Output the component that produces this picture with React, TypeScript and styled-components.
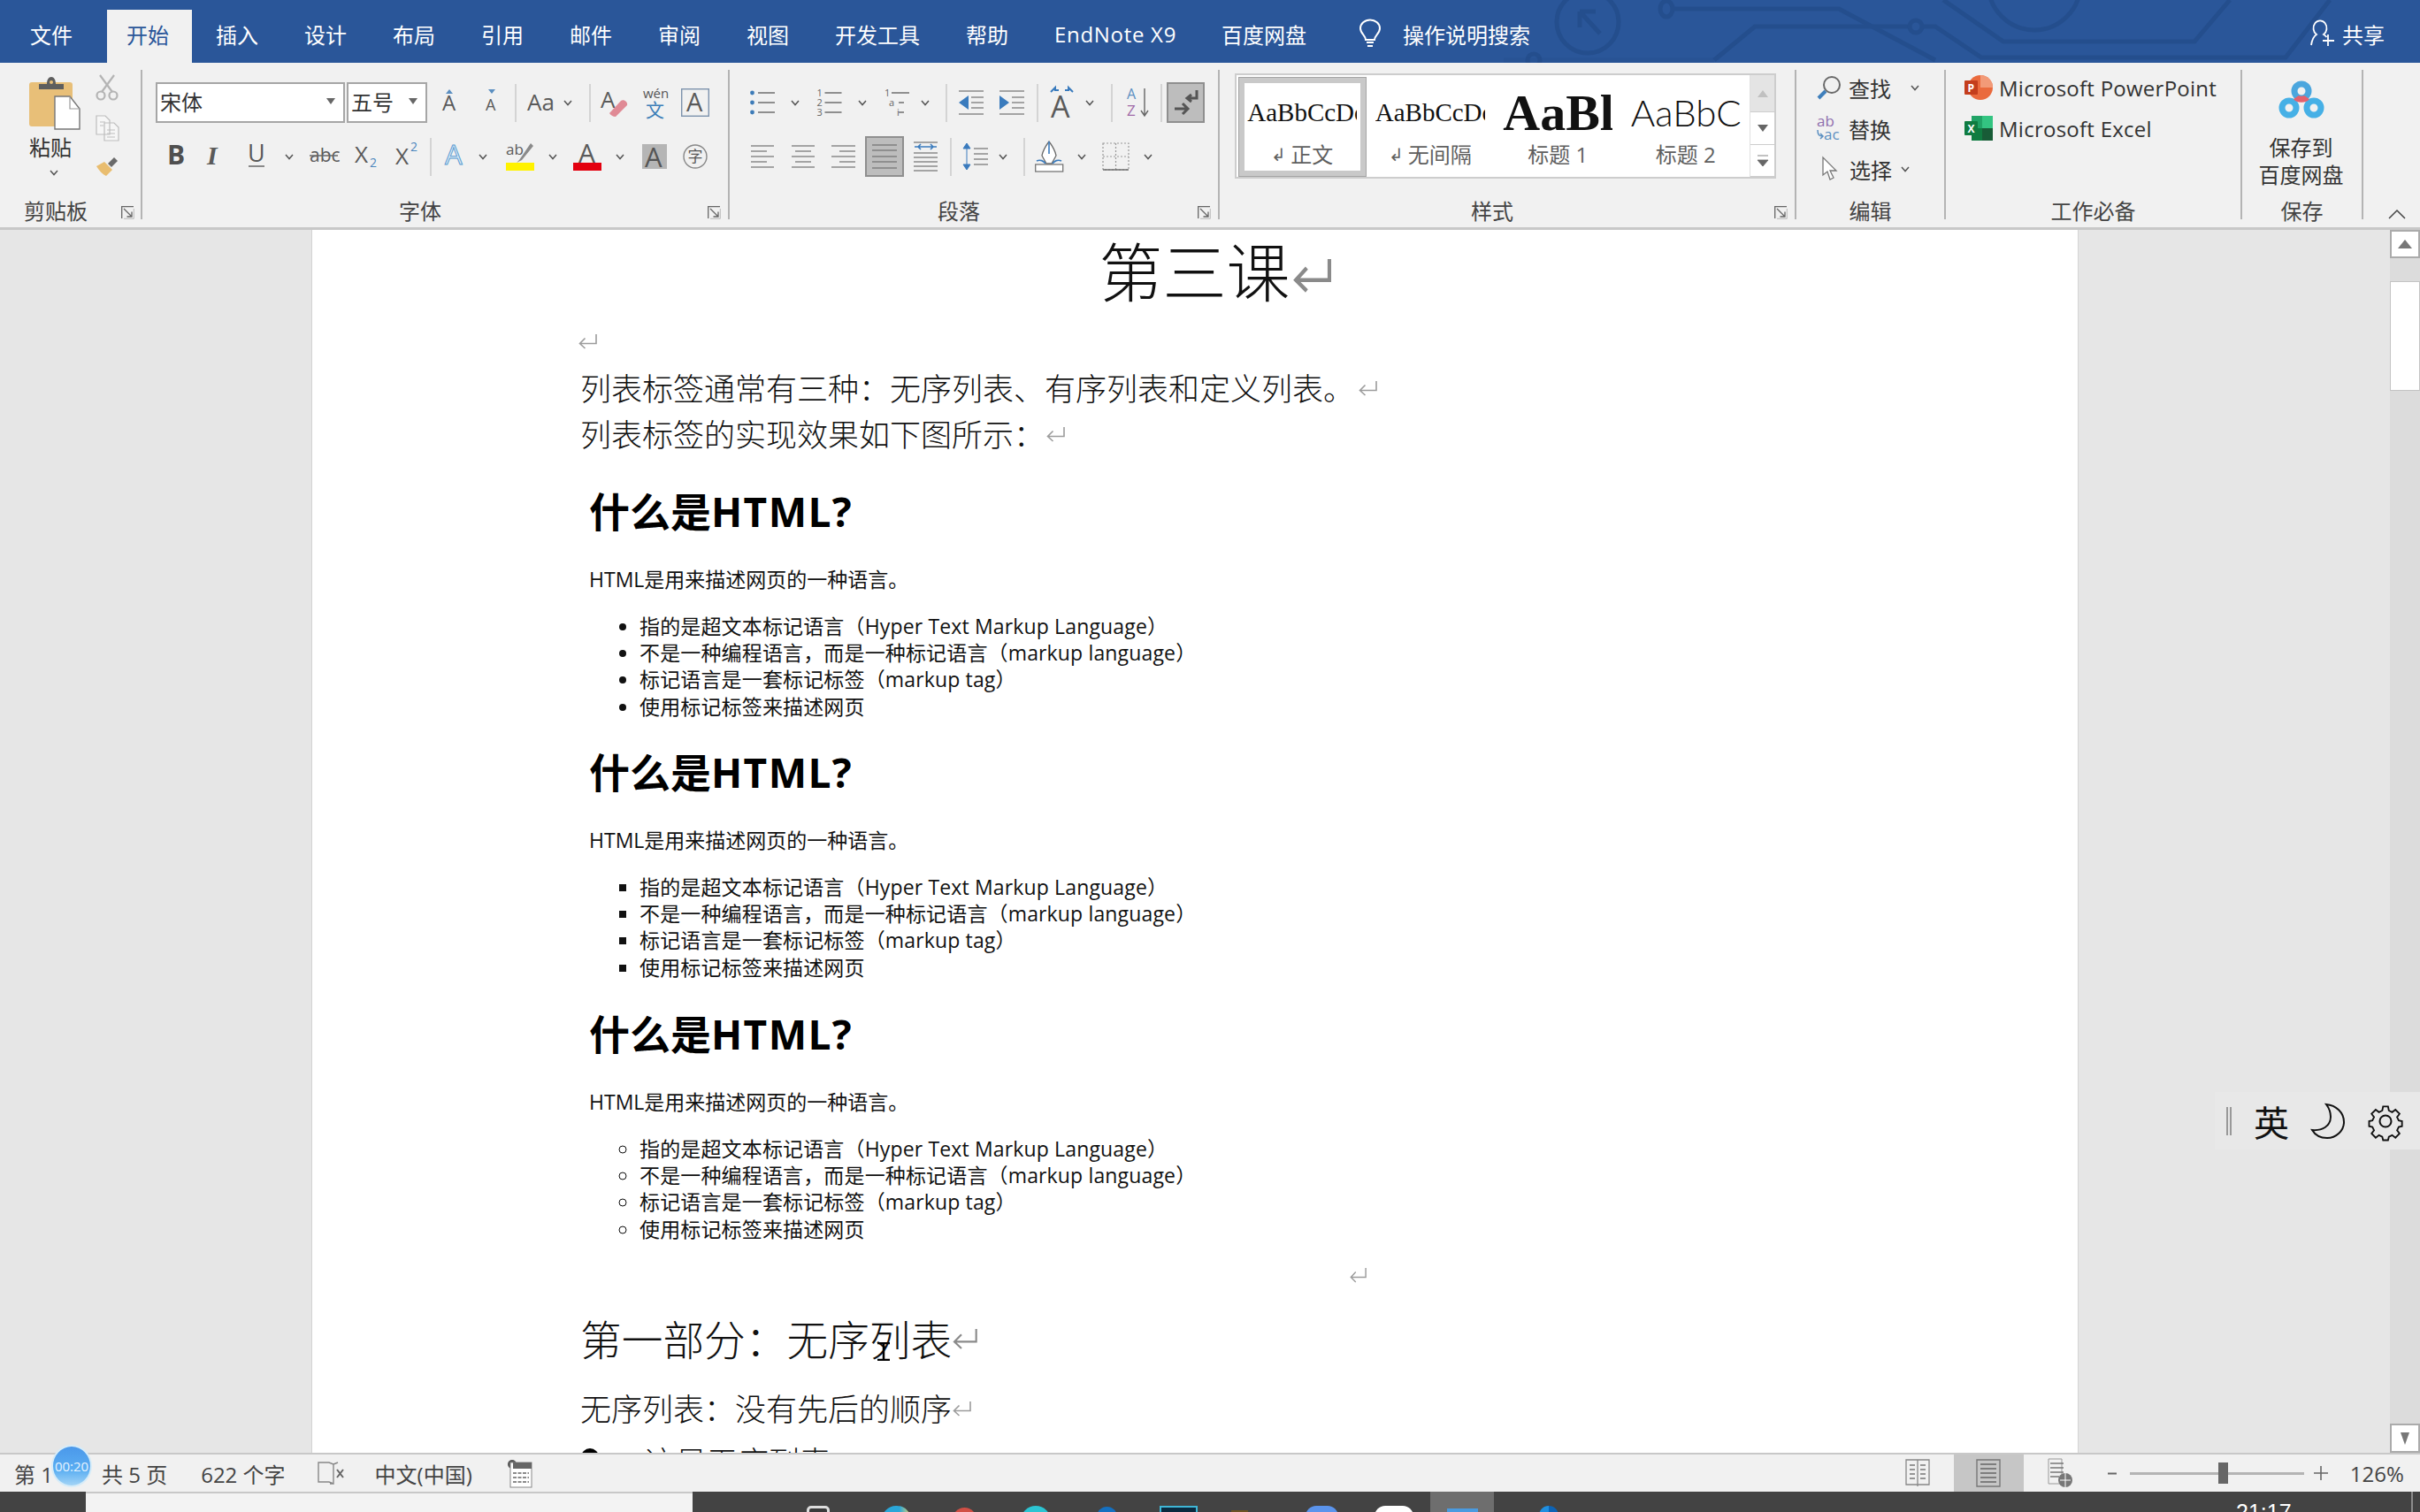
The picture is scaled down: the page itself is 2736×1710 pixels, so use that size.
import React from "react";
import styled, { createGlobalStyle } from "styled-components";

const UI = `"Open Sans","Noto Sans CJK SC",sans-serif`;
const SERIF = `"Liberation Serif","Noto Sans CJK SC",serif`;

const Global = createGlobalStyle`
  html, body { margin: 0; padding: 0; background: #f1f1f1; }
  * { box-sizing: border-box; }
`;

const Shell = styled.div`
  width: 2736px; height: 1710px; overflow: hidden; display: flex; flex-direction: column;
  font-family: ${UI}; font-size: 24px; color: #333; position: relative;
`;

/* ---------- title / tabs ---------- */
const TabBar = styled.div`
  height: 71px; flex: none; background: #2a5699; display: flex; align-items: flex-end;
  padding-left: 8px; position: relative; overflow: hidden;
`;
const Watermark = styled.svg`
  position: absolute; left: 0; top: 0; pointer-events: none;
`;
const Tab = styled.div<{ $w?: number; $ls?: number }>`
  height: 60px; padding: 0 26px 6px; display: flex; align-items: center; color: #fff;
  font-size: 24px; white-space: nowrap; position: relative; ${(p) => (p.$w ? `width:${p.$w}px;` : "")}
  letter-spacing: ${(p) => p.$ls ?? 0}px;
`;
const ActiveTab = styled(Tab)`
  background: #f1f1f1; color: #2a5699; margin: 0 1px 0 13px; padding: 0 26px 6px 22px;
`;
const SearchHint = styled.div`
  display: flex; align-items: center; gap: 24px; color: #fff; height: 60px; padding-bottom: 6px;
  margin-left: 33px; position: relative;
`;
const ShareBox = styled.div`
  margin-left: auto; margin-right: 40px; height: 60px; padding-bottom: 6px; display: flex; align-items: center; gap: 8px;
  color: #fff; position: relative;
`;

/* ---------- ribbon ---------- */
const Ribbon = styled.div`
  height: 189px; flex: none; background: #f1f1f1; border-bottom: 3px solid #c8c8c8; display: flex;
`;
const Group = styled.section<{ $w: number }>`
  width: ${(p) => p.$w}px; flex: none; height: 186px; display: flex; flex-direction: column; position: relative;
`;
const GroupBody = styled.div`
  height: 156px; flex: none; position: relative; display: flex;
`;
const GroupFooter = styled.div<{ $pr?: number }>`
  height: 24px; line-height: 24px; text-align: center; color: #444; padding-right: ${(p) => p.$pr ?? 0}px;
  position: relative;
`;
const Launcher = styled.svg<{ $r: number }>`
  position: absolute; right: ${(p) => p.$r}px; top: 6px;
`;
const GroupSep = styled.div`
  width: 2px; height: 169px; margin-top: 8px; background: #b4b4b4; flex: none;
`;
const Rows = styled.div`
  display: flex; flex-direction: column; gap: 15px; padding-top: 22px; width: 100%;
`;
const ToolRow = styled.div`
  height: 46px; display: flex; align-items: center;
`;
const Combo = styled.div<{ $ml: number; $w: number }>`
  margin-left: ${(p) => p.$ml}px; width: ${(p) => p.$w}px; height: 46px; background: #fff; border: 2px solid #a6a6a6;
  display: flex; align-items: center; justify-content: space-between; padding: 0 8px 3px 3px; color: #333; flex: none;
`;
const VSep = styled.div<{ $ml: number }>`
  margin-left: ${(p) => p.$ml}px; width: 2px; height: 43px; background: #d4d4d4; flex: none;
`;
const Ic = styled.svg<{ $ml?: number }>`
  display: block; flex: none; margin-left: ${(p) => p.$ml ?? 0}px; overflow: visible;
`;
const PressedBtn = styled.div<{ $ml: number; $w: number }>`
  margin-left: ${(p) => p.$ml}px; width: ${(p) => p.$w}px; height: 46px; flex: none; background: #bdbdbd;
  border: 2px solid #8f8f8f; display: flex; align-items: center; justify-content: center;
`;

/* clipboard */
const PasteCol = styled.div`
  margin-left: 33px; width: 57px; padding-top: 16px; display: flex; flex-direction: column; align-items: flex-start;
`;
const PasteLabel = styled.div`
  margin: 5px 0 9px; height: 32px; line-height: 32px; color: #333;
`;
const SmallCol = styled.div`
  margin-left: 18px; padding-top: 14px; display: flex; flex-direction: column; gap: 17px;
`;

/* styles gallery */
const Gallery = styled.div`
  margin: 12px 0 0 17px; width: 612px; height: 119px; background: #fff; border: 2px solid #cdcdcd; display: flex;
`;
const GalleryItems = styled.div`
  width: 580px; padding: 2px 0 2px 2px; display: flex;
`;
const StyleItem = styled.div<{ $sel?: boolean }>`
  width: 144.5px; flex: none; height: 113px; display: flex; flex-direction: column; align-items: center; overflow: hidden;
  ${(p) => (p.$sel ? "border: 7px solid #c9c9c9; outline: 1px solid #a5a5a5; outline-offset: -1px;" : "border: 7px solid transparent;")}
`;
const Preview = styled.div<{ $font: string; $size: number; $weight?: number; $w?: number }>`
  height: 66px; width: ${(p) => p.$w ?? 124}px; overflow: hidden; display: flex; align-items: center; white-space: nowrap; flex: none;
  font-family: ${(p) => p.$font}; font-size: ${(p) => p.$size}px; font-weight: ${(p) => p.$weight ?? 400}; color: #111;
`;
const StyleName = styled.div`
  height: 30px; line-height: 30px; color: #5f5f5f; white-space: nowrap; display: flex; align-items: center; gap: 5px;
`;
const GalleryScroll = styled.div`
  width: 28px; display: flex; flex-direction: column; border-left: 1px solid #e0e0e0;
`;
const ScrollCell = styled.div<{ $h: number; $bg?: string }>`
  height: ${(p) => p.$h}px; background: ${(p) => p.$bg ?? "#fff"}; border-bottom: 1px solid #cdcdcd;
  display: flex; align-items: center; justify-content: center;
`;

/* edit + must-have */
const CmdCol = styled.div`
  padding-top: 6px; display: flex; flex-direction: column; width: 100%;
`;
const CmdRow = styled.div<{ $pl: number }>`
  height: 46px; display: flex; align-items: center; padding-left: ${(p) => p.$pl}px; padding-bottom: 2px; white-space: nowrap; color: #333;
`;
const CmdText = styled.span<{ $ml: number; $ls?: number }>`
  margin-left: ${(p) => p.$ml}px; letter-spacing: ${(p) => p.$ls ?? 0}px;
`;
const SaveCol = styled.div`
  width: 100%; padding-top: 21px; display: flex; flex-direction: column; align-items: center; padding-right: 2px;
`;
const SaveText = styled.div`
  margin-top: 18px; line-height: 31px; text-align: center; color: #333;
`;
const CollapseZone = styled.div`
  flex: 1; display: flex; align-items: flex-end; justify-content: flex-end; padding: 0 16px 9px 0; height: 186px;
`;

/* ---------- document ---------- */
const Canvas = styled.div`
  height: 1383px; flex: none; display: flex; background: #e6e6e6; overflow: hidden;
`;
const PageArea = styled.div`
  width: 2702px; flex: none; padding-left: 352px; overflow: hidden;
`;
const Page = styled.article`
  width: 1998px; height: 1383px; background: #fff; border: solid #d4d4d4; border-width: 0 1px; overflow: hidden;
  padding: 13px 304px 0 303px; font-family: ${SERIF}; font-weight: 300; color: #111; font-size: 35px;
`;
const DocTitle = styled.h1`
  margin: 0 0 15px; height: 76px; line-height: 76px; font-size: 72px; font-weight: 300; text-align: center; white-space: nowrap;
`;
const DocLine = styled.p<{ $h?: number; $mt?: number; $pl?: number }>`
  margin: ${(p) => p.$mt ?? 0}px 0 0; padding-left: ${(p) => p.$pl ?? 0}px; height: ${(p) => p.$h ?? 52}px;
  line-height: ${(p) => p.$h ?? 52}px; white-space: nowrap;
`;
const Ret = styled.svg<{ $ml?: number; $mr?: number; $va?: number }>`
  margin-left: ${(p) => p.$ml ?? 2}px; margin-right: ${(p) => p.$mr ?? 0}px; vertical-align: ${(p) => p.$va ?? 6}px; overflow: visible;
`;
const DemoBlock = styled.div<{ $mt?: number }>`
  margin: ${(p) => p.$mt ?? 0}px 0 0 10px; height: 265px; font-family: ${UI}; font-weight: 400; color: #111;
`;
const DemoH = styled.h2`
  margin: 0; height: 60px; line-height: 55px; font-size: 46px; font-weight: 700; color: #000; white-space: nowrap;
`;
const DemoLatin = styled.span`
  letter-spacing: 1.4px;
`;
const DemoP = styled.p`
  margin: 29px 0 0; height: 30px; line-height: 30px; font-size: 23px;
`;
const DemoList = styled.ul<{ $kind: string }>`
  margin: 23px 0 0; padding: 0 0 0 57px; list-style: ${(p) => p.$kind}; font-size: 23px; line-height: 30.2px; letter-spacing: .15px;
`;
const DocH2 = styled.h2`
  margin: 27px 0 0; height: 60px; line-height: 60px; font-size: 46.7px; font-weight: 300; position: relative; white-space: nowrap;
`;
const Cursor = styled.svg`
  position: absolute; left: 333px; top: 31px;
`;
const DocBullet = styled.div`
  margin-top: 5px; height: 50px; display: flex; align-items: center; white-space: nowrap;
`;
const BigDot = styled.span`
  width: 20px; height: 20px; border-radius: 50%; background: #000; margin: -6px 26px 0 1px; flex: none;
`;
const SmallDot = styled.span`
  width: 4px; height: 4px; border-radius: 50%; background: #222; margin-right: 22px; flex: none;
`;
const Scrollbar = styled.aside`
  width: 34px; flex: none; background: #dcdcdc; display: flex; flex-direction: column;
`;
const ScrollBtn = styled.div<{ $h: number }>`
  height: ${(p) => p.$h}px; background: #fff; border: 2px solid #ababab; display: flex; align-items: center; justify-content: center; flex: none;
`;
const Thumb = styled.div`
  margin-top: 26px; height: 124px; background: #fff; border: 1px solid #c4c4c4; flex: none;
`;
const ScrollFill = styled.div`
  flex: 1;
`;

/* ---------- status ---------- */
const StatusBar = styled.footer`
  height: 44px; flex: none; background: #f1f1f1; border-top: 2px solid #c8c8c8; display: flex; align-items: center;
  color: #444; font-size: 24px; padding-left: 16px; white-space: nowrap;
`;
const StatusText = styled.span<{ $ml?: number }>`
  margin-left: ${(p) => p.$ml ?? 0}px;
`;
const ViewPressed = styled.div<{ $ml: number }>`
  margin-left: ${(p) => p.$ml}px; width: 79px; height: 42px; background: #c6c6c6; display: flex; align-items: center; justify-content: center; flex: none;
`;
const SliderTrack = styled.div`
  margin-left: 11px; width: 197px; height: 3px; background: #b4b4b4; position: relative; flex: none;
`;
const SliderThumb = styled.div`
  position: absolute; left: 100px; top: -11px; width: 11px; height: 24px; background: #666;
`;
const Bubble = styled.div`
  position: absolute; left: 58px; top: 1634px; width: 46px; height: 48px; border-radius: 50%;
  background: linear-gradient(180deg, #4b98ea 0%, #5aaef2 60%, #a3d4f6 100%); border: 2px solid #d7ecf8;
  color: #e7f3ff; font-size: 15px; display: flex; align-items: flex-start; justify-content: center; padding-top: 12px;
`;

/* ---------- taskbar ---------- */
const Taskbar = styled.div`
  height: 23px; flex: none; background: #434343; display: flex; overflow: hidden; position: relative;
`;
const SearchBox = styled.div`
  margin-left: 97px; width: 686px; height: 23px; background: #f3f3f3; border-top: 2px solid #c8c8c8; flex: none;
`;
const TaskIcon = styled.div<{ $ml: number; $w: number; $top: number; $bg: string; $round?: number; $border?: string }>`
  margin: ${(p) => p.$top}px 0 0 ${(p) => p.$ml}px; width: ${(p) => p.$w}px; height: 40px; background: ${(p) => p.$bg};
  border-radius: ${(p) => p.$round ?? 0}px; flex: none; ${(p) => (p.$border ? `border: ${p.$border};` : "")}
`;
const TaskActive = styled.div<{ $ml: number }>`
  margin-left: ${(p) => p.$ml}px; width: 72px; height: 23px; background: #6e6e6e; flex: none; display: flex; justify-content: center; padding-top: 19px;
`;
const TaskActiveBar = styled.div`
  width: 35px; height: 10px; background: #4a9be0;
`;
const Clock = styled.div`
  margin-left: 766px; margin-top: 9px; color: #fff; font-family: "Liberation Sans", sans-serif; font-size: 25px; line-height: 28px; flex: none;
`;
const TaskEdge = styled.div`
  position: absolute; right: 8px; top: 0; width: 2px; height: 23px; background: #8c8c8c;
`;

/* ---------- IME ---------- */
const Ime = styled.div`
  position: absolute; left: 2504px; top: 1235px; width: 232px; height: 65px; background: #e8e8e8;
  display: flex; align-items: center;
`;
const ImeGrip = styled.div`
  margin-left: 13px; width: 6px; height: 32px; border: solid #999; border-width: 0 2px; flex: none;
`;
const ImeChar = styled.span`
  margin-left: 25px; font-size: 40px; color: #111; font-family: "Noto Sans CJK SC", sans-serif; line-height: 1;
`;

/* ---------- icon bits ---------- */
const G = "#5a5a5a";
const A = (p: { x?: number; y?: number; s: number; f?: string; w?: number; st?: string }) => (
  <text x={p.x ?? 0} y={p.y ?? 0} fontSize={p.s} fontFamily="Open Sans, sans-serif" fontWeight={p.w ?? 400} fill={p.f ?? G} stroke={p.st}>A</text>
);
const Chev = ({ ml }: { ml: number }) => (
  <Ic $ml={ml} width={10} height={7} viewBox="0 0 10 7"><path d="M1 1l4 4.5L9 1" fill="none" stroke="#555" strokeWidth="1.5" /></Ic>
);
const Drop = () => (
  <Ic width={12} height={7} viewBox="0 0 12 7"><path d="M1 0h10L6 7z" fill="#666" /></Ic>
);
const Lines = ({ ml, w, h, rows, color = "#777" }: { ml: number; w: number; h: number; rows: [number, number, number][]; color?: string }) => (
  <Ic $ml={ml} width={w} height={h} viewBox={`0 0 ${w} ${h}`}>
    {rows.map(([x1, x2, y], i) => <path key={i} d={`M${x1} ${y}H${x2}`} stroke={color} strokeWidth="1.5" />)}
  </Ic>
);
const LaunchIcon = ({ r }: { r: number }) => (
  <Launcher $r={r} width={15} height={15} viewBox="0 0 15 15">
    <path d="M.7 14V.7H14M3 3l9 9M12 6.5V12H6.5" fill="none" stroke="#666" strokeWidth="1.3" />
    <path d="M14.3 3v11.3H3" fill="none" stroke="#bbb" strokeWidth="1" />
  </Launcher>
);
const RetMark = ({ w = 21, h = 16, ml, mr, va, c = "#9c9c9c", sw = 1.6 }: { w?: number; h?: number; ml?: number; mr?: number; va?: number; c?: string; sw?: number }) => (
  <Ret $ml={ml} $mr={mr} $va={va} width={w} height={h} viewBox="0 0 21 16" preserveAspectRatio="none">
    <path d="M20 0v10.5H2M7.5 4.5L1.5 10.5l6 5.5" fill="none" stroke={c} strokeWidth={sw} />
  </Ret>
);

const listIcon = (kind: "b" | "n" | "m") => (
  <>
    {[3, 14, 25].map((y, i) => (
      <g key={y}>
        {kind === "b" && <circle cx="2.5" cy={y} r="2.4" fill="#3e7cb8" />}
        {kind === "n" && <text x="0" y={y + 4} fontSize="11" fontFamily="Open Sans" fill="#666">{i + 1}</text>}
        {kind === "m" && <text x={i * 9 - (i ? 4 : 0)} y={y + 4} fontSize="11" fontFamily="Open Sans" fill="#666">{["1", "a", "i"][i]}</text>}
        <path d={`M${kind === "m" ? 8 + (i ? 8 : 0) : 9} ${y}H${kind === "m" ? 28 - (i ? 6 : 0) : 28}`} stroke="#777" strokeWidth="1.6" />
      </g>
    ))}
  </>
);

function App() {
  const items = ["指的是超文本标记语言（Hyper Text Markup Language）", "不是一种编程语言，而是一种标记语言（markup language）", "标记语言是一套标记标签（markup tag）", "使用标记标签来描述网页"];
  const demo = (kind: string, mt?: number) => (
    <DemoBlock $mt={mt}>
      <DemoH>什么是<DemoLatin>HTML?</DemoLatin></DemoH>
      <DemoP>HTML是用来描述网页的一种语言。</DemoP>
      <DemoList $kind={kind}>{items.map((t) => <li key={t}>{t}</li>)}</DemoList>
    </DemoBlock>
  );
  return (
    <Shell>
      <Global />
      <TabBar>
        <Watermark width={2736} height={71} viewBox="0 0 2736 71" fill="none" stroke="#244e8d" strokeWidth="5">
          <circle cx="1795" cy="25" r="35" />
          <path d="M1809 38l-23-25M1786 13v18M1786 13h18" />
          <ellipse cx="1884" cy="10" rx="7" ry="9" />
          <path d="M1891 10h188l109 58" />
          <path d="M1938 68l46-38h175" /><circle cx="2166" cy="30" r="7" />
          <path d="M2173 30h15l52 35h344l50-65" />
          <path d="M2197 0l68 47h216l40-47" />
          <circle cx="2300" cy="-18" r="52" />
          <circle cx="1734" cy="68" r="7" />
          <path d="M1700 68h238" opacity=".35" />
        </Watermark>
        <Tab>文件</Tab>
        <ActiveTab>开始</ActiveTab>
        {["插入", "设计", "布局", "引用", "邮件", "审阅", "视图", "开发工具", "帮助"].map((t) => <Tab key={t}>{t}</Tab>)}
        <Tab $w={189} $ls={0.7}>EndNote X9</Tab>
        <Tab>百度网盘</Tab>
        <SearchHint>
          <Ic width={26} height={32} viewBox="0 0 26 32"><path d="M8 23c0-5-6-7-6-13a11 9.5 0 0 1 22 0c0 6-6 8-6 13zM9 26h8M10 30h6" fill="none" stroke="#fff" strokeWidth="2" /></Ic>
          操作说明搜索
        </SearchHint>
        <ShareBox>
          <Ic width={28} height={30} viewBox="0 0 28 30"><path d="M1 28c1-7 3-10 6-12a7.5 8.5 0 1 1 8 0c1.500.8 2.500 1.700 3.500 3M20 16v13M14 23h13" fill="none" stroke="#fff" strokeWidth="1.800" /></Ic>
          共享
        </ShareBox>
      </TabBar>

      <Ribbon>
        <Group $w={159}>
          <GroupBody>
            <PasteCol>
              <Ic width={57} height={59} viewBox="0 0 57 59">
                <rect x="0" y="6" width="49" height="50" rx="3" fill="#e8bf78" />
                <path d="M11 14V8h9c0-5 2-8 5-8s5 3 5 8h9v6z" fill="#5e5e5e" />
                <circle cx="25" cy="6" r="2" fill="#e8bf78" />
                <path d="M29 22h17l11 14v23H29z" fill="#fff" stroke="#777" strokeWidth="1.4" />
                <path d="M46 22v14h11" fill="none" stroke="#999" strokeWidth="1.2" />
              </Ic>
              <PasteLabel>粘贴</PasteLabel>
              <Ic $ml={23} width={10} height={7} viewBox="0 0 10 7"><path d="M1 1l4 4.5L9 1" fill="none" stroke="#555" strokeWidth="1.500" /></Ic>
            </PasteCol>
            <SmallCol>
              <Ic width={26} height={28} viewBox="0 0 26 28" fill="none" stroke="#b4b4b4" strokeWidth="2.200">
                <path d="M5 0l14 19M21 0L7 19" /><circle cx="6" cy="23" r="4.500" /><circle cx="20" cy="23" r="4.500" />
              </Ic>
              <Ic width={27} height={30} viewBox="0 0 27 30" fill="#f6f6f6" stroke="#bdbdbd" strokeWidth="1.200">
                <path d="M1 1h10l5 5v16H1zM10 9h11l5 5v15H10z" /><path d="M5 8h6M5 12h4M13 17h9M13 21h9M13 25h9" />
              </Ic>
              <Ic width={26} height={22} viewBox="0 0 26 22">
                <path d="M1 11l9-5 9 9-7 7c-4-2-8-6-11-11z" fill="#e9bd6f" />
                <path d="M14 8l7-7 4 4-7 7z" fill="#6a6a6a" />
              </Ic>
            </SmallCol>
          </GroupBody>
          <GroupFooter $pr={33}>剪贴板<LaunchIcon r={7} /></GroupFooter>
        </Group>
        <GroupSep />

        <Group $w={662}>
          <GroupBody>
            <Rows>
              <ToolRow>
                <Combo $ml={15} $w={214}>宋体<Drop /></Combo>
                <Combo $ml={2} $w={91}>五号<Drop /></Combo>
                <Ic $ml={16} width={18} height={36} viewBox="0 0 18 36"><path d="M9 3l4 5H5z" fill="#5b8fc1" /><A y={27} x={1} s={24} /></Ic>
                <Ic $ml={31} width={14} height={36} viewBox="0 0 14 36"><path d="M4 3h8l-4 5z" fill="#5b8fc1" /><A y={27} x={1} s={18} /></Ic>
                <VSep $ml={20} />
                <Ic $ml={12} width={30} height={30} viewBox="0 0 30 30"><text x="0" y="24" fontSize="26" fontFamily="Open Sans" fill={G}>Aa</text></Ic>
                <Chev ml={11} />
                <VSep $ml={19} />
                <Ic $ml={12} width={30} height={32} viewBox="0 0 30 32"><A y={22} x={-1} s={26} /><path d="M9 28l13-14c3-2 8 1 7 5L16 32c-3 0-6-2-7-4z" fill="#e08a95" /></Ic>
                <Ic $ml={16} width={28} height={36} viewBox="0 0 28 36"><text x="1" y="13" fontSize="15" fontFamily="Open Sans" fill="#555">wén</text><text x="4" y="34" fontSize="21" fontFamily="Noto Sans CJK SC" fill="#3d7fb8">文</text></Ic>
                <Ic $ml={16} width={32} height={32} viewBox="0 0 32 32"><rect x=".7" y=".7" width="30.600" height="30.600" fill="none" stroke="#7d93ad" strokeWidth="1.400" /><A x={6} y={26} s={29} /></Ic>
              </ToolRow>
              <ToolRow>
                <Ic $ml={28} width={18} height={30} viewBox="0 0 18 30"><text y="24" fontSize="30" fontWeight="700" fontFamily="Open Sans" fill="#4f4f4f">B</text></Ic>
                <Ic $ml={29} width={14} height={30} viewBox="0 0 14 30"><text y="24" x="-2" fontSize="30" fontStyle="italic" fontWeight="700" fontFamily="Liberation Serif" fill={G}>I</text></Ic>
                <Ic $ml={31} width={18} height={30} viewBox="0 0 18 30"><text y="21" x="-1" fontSize="27" fontFamily="Open Sans" fill={G}>U</text><path d="M0 26h18" stroke="#666" strokeWidth="1.500" /></Ic>
                <Chev ml={23} />
                <Ic $ml={18} width={32} height={30} viewBox="0 0 32 30"><text y="21" fontSize="21" fontFamily="Open Sans" fill={G}>abc</text><path d="M0 14h32" stroke="#666" strokeWidth="1.500" /></Ic>
                <Ic $ml={19} width={26} height={30} viewBox="0 0 26 30"><text y="22" fontSize="26" fontFamily="Open Sans" fill={G}>X</text><text x="17" y="27" fontSize="14" fontFamily="Open Sans" fill="#4d87bd">2</text></Ic>
                <Ic $ml={20} width={26} height={30} viewBox="0 0 26 30"><text y="24" fontSize="26" fontFamily="Open Sans" fill={G}>X</text><text x="17" y="9" fontSize="14" fontFamily="Open Sans" fill="#4d87bd">2</text></Ic>
                <VSep $ml={13} />
                <Ic $ml={15} width={22} height={30} viewBox="0 0 22 30"><A x={0} y={24} s={31} f="#dff0fb" st="#5b9bd0" /></Ic>
                <Chev ml={16} />
                <Ic $ml={21} width={32} height={32} viewBox="0 0 32 32"><text y="14" x="0" fontSize="17" fontFamily="Open Sans" fill={G}>ab</text><path d="M28 1L15 20l-3 3 6-3L31 4z" fill="#8a8a8a" /><rect y="23" width="32" height="9" fill="#fff200" /></Ic>
                <Chev ml={16} />
                <Ic $ml={18} width={32} height={32} viewBox="0 0 32 32"><A x={6} y={23} s={30} /><rect y="23" width="32" height="9" fill="#e3000f" /></Ic>
                <Chev ml={16} />
                <Ic $ml={20} width={28} height={28} viewBox="0 0 28 28"><rect width="28" height="28" fill="#b5b5b5" /><A x={3} y={26} s={31} f="#555" /></Ic>
                <Ic $ml={18} width={28} height={28} viewBox="0 0 28 28"><circle cx="14" cy="14" r="13" fill="none" stroke="#888" strokeWidth="1.400" /><text x="5.500" y="20" fontSize="17" fontFamily="Noto Sans CJK SC" fill="#555">字</text></Ic>
              </ToolRow>
            </Rows>
          </GroupBody>
          <GroupFooter $pr={34}>字体<LaunchIcon r={8} /></GroupFooter>
        </Group>
        <GroupSep />

        <Group $w={552}>
          <GroupBody>
            <Rows>
              <ToolRow>
                <Ic $ml={23} width={28} height={28} viewBox="0 0 28 28">{listIcon("b")}</Ic>
                <Chev ml={18} />
                <Ic $ml={19} width={29} height={28} viewBox="0 0 28 28">{listIcon("n")}</Ic>
                <Chev ml={18} />
                <Ic $ml={20} width={28} height={28} viewBox="0 0 28 28">{listIcon("m")}</Ic>
                <Chev ml={13} />
                <VSep $ml={18} />
                <Ic $ml={13} width={28} height={28} viewBox="0 0 28 28"><path d="M0 1h28M14 8h14M14 14h14M14 20h14M0 27h28" stroke="#8a8a8a" strokeWidth="1.500" /><path d="M11 6v16L0 14z" fill="#3a7bbd" /></Ic>
                <Ic $ml={18} width={28} height={28} viewBox="0 0 28 28"><path d="M0 1h28M14 8h14M14 14h14M14 20h14M0 27h28" stroke="#8a8a8a" strokeWidth="1.500" /><path d="M0 6v16l11-8z" fill="#3a7bbd" /></Ic>
                <VSep $ml={14} />
                <Ic $ml={11} width={31} height={36} viewBox="0 0 31 36"><path d="M3 6l5-5v3h4M28 6l-5-5v3h-4" fill="none" stroke="#3a7bbd" strokeWidth="2" /><A x={3} y={35} s={34} /></Ic>
                <Chev ml={11} />
                <VSep $ml={19} />
                <Ic $ml={16} width={26} height={36} viewBox="0 0 26 36"><text y="14" fontSize="16" fontFamily="Open Sans" fill="#5b8fc1">A</text><text y="33" fontSize="17" fontFamily="Open Sans" fill="#a06ba8">Z</text><path d="M20 2v30M16 27l4 6 4-6" fill="none" stroke="#666" strokeWidth="1.400" /></Ic>
                <VSep $ml={12} />
                <PressedBtn $ml={5} $w={43}>
                  <Ic width={30} height={36} viewBox="0 0 30 36"><path d="M27 4v9H17M21 9l-5 4 5 4" fill="none" stroke="#555" strokeWidth="3" /><path d="M2 25h14M11 19l6 6-6 6" fill="none" stroke="#555" strokeWidth="3" /></Ic>
                </PressedBtn>
              </ToolRow>
              <ToolRow>
                <Lines ml={24} w={26} h={26} color="#8a8a8a" rows={[[0,26,1],[0,18,7],[0,26,13],[0,18,19],[0,26,25]]} />
                <Lines ml={20} w={26} h={26} color="#8a8a8a" rows={[[0,26,1],[4,22,7],[0,26,13],[4,22,19],[0,26,25]]} />
                <Lines ml={19} w={27} h={26} color="#8a8a8a" rows={[[0,27,1],[9,27,7],[0,27,13],[9,27,19],[0,27,25]]} />
                <PressedBtn $ml={11} $w={44}>
                  <Lines ml={0} w={28} h={28} color="#808080" rows={[[0,28,1],[0,28,7],[0,28,14],[0,28,20],[0,28,27]]} />
                </PressedBtn>
                <Ic $ml={11} width={27} height={34} viewBox="0 0 27 34"><path d="M1 6h25M5 6l3-3M5 6l3 3M22 6l-3-3M22 6l-3 3" fill="none" stroke="#3a7bbd" strokeWidth="1.600" /><path d="M0 1h27M0 13h27M0 18h27M0 23h27M0 28h27M0 33h27" stroke="#8a8a8a" strokeWidth="1.400" /></Ic>
                <VSep $ml={14} />
                <Ic $ml={12} width={29} height={34} viewBox="0 0 29 34"><path d="M5 3v28M1 8l4-6 4 6zM1 26l4 6 4-6z" fill="#3a7bbd" stroke="#3a7bbd" /><path d="M13 8h16M13 14h16M13 20h16M13 26h16" stroke="#8a8a8a" strokeWidth="1.500" /></Ic>
                <Chev ml={12} />
                <VSep $ml={18} />
                <Ic $ml={11} width={33} height={36} viewBox="0 0 33 36"><path d="M16 1c3 4 7 11 8 16l-5 9h-6L8 17c1-5 5-12 8-16z" fill="#fff" stroke="#6a6a6a" strokeWidth="1.300" /><path d="M16 1v14M2 23c4-2 8 0 10 3M30 23c-4-2-8 0-10 3" fill="none" stroke="#3a7bbd" strokeWidth="1.600" /><rect x=".7" y="27" width="31" height="8" fill="#fff" stroke="#777" strokeWidth="1.300" /></Ic>
                <Chev ml={15} />
                <Ic $ml={18} width={31} height={32} viewBox="0 0 31 32"><path d="M1 1h29v30H1zM15.500 1v30M1 16h29" fill="none" stroke="#999" strokeWidth="1.200" strokeDasharray="2 2" /><path d="M1 31h29" stroke="#666" strokeWidth="1.400" /></Ic>
                <Chev ml={16} />
              </ToolRow>
            </Rows>
          </GroupBody>
          <GroupFooter $pr={34}>段落<LaunchIcon r={8} /></GroupFooter>
        </Group>
        <GroupSep />

        <Group $w={650}>
          <GroupBody>
            <Gallery>
              <GalleryItems>
                <StyleItem $sel><Preview $font={SERIF} $size={29}>AaBbCcDc</Preview><StyleName><small>↲</small>正文</StyleName></StyleItem>
                <StyleItem><Preview $font={SERIF} $size={29}>AaBbCcDc</Preview><StyleName><small>↲</small>无间隔</StyleName></StyleItem>
                <StyleItem><Preview $font={SERIF} $size={58} $weight={700} $w={124}>AaBl</Preview><StyleName>标题 1</StyleName></StyleItem>
                <StyleItem><Preview $font={`Lato,sans-serif`} $size={42} $weight={300}>AaBbC</Preview><StyleName>标题 2</StyleName></StyleItem>
              </GalleryItems>
              <GalleryScroll>
                <ScrollCell $h={42} $bg="#e4e4e4"><Ic width={12} height={8} viewBox="0 0 12 8"><path d="M6 0l6 8H0z" fill="#c0c0c0" /></Ic></ScrollCell>
                <ScrollCell $h={37}><Ic width={12} height={8} viewBox="0 0 12 8"><path d="M0 0h12L6 8z" fill="#666" /></Ic></ScrollCell>
                <ScrollCell $h={36}><Ic width={12} height={12} viewBox="0 0 12 12"><path d="M0 0h12M0 5h12L6 12z" fill="#666" stroke="#666" strokeWidth=".8" /></Ic></ScrollCell>
              </GalleryScroll>
            </Gallery>
          </GroupBody>
          <GroupFooter $pr={34}>样式<LaunchIcon r={8} /></GroupFooter>
        </Group>
        <GroupSep />

        <Group $w={167}>
          <GroupBody>
            <CmdCol>
              <CmdRow $pl={23}>
                <Ic width={28} height={28} viewBox="0 0 28 28"><circle cx="17" cy="11" r="9" fill="none" stroke="#6a6a6a" strokeWidth="2" /><path d="M10 18L2 26" stroke="#3f7fbc" strokeWidth="4" /></Ic>
                <CmdText $ml={8}>查找</CmdText><Chev ml={22} />
              </CmdRow>
              <CmdRow $pl={23}>
                <Ic width={28} height={30} viewBox="0 0 28 30"><text y="13" fontSize="17" fontFamily="Open Sans" fill="#8f6fae">ab</text><text x="8" y="28" fontSize="17" fontFamily="Open Sans" fill="#5b8fc1">ac</text><path d="M1 17c0 6 2 7 6 7M4 21l3 3-3 3" fill="none" stroke="#5b8fc1" strokeWidth="1.500" /></Ic>
                <CmdText $ml={8}>替换</CmdText>
              </CmdRow>
              <CmdRow $pl={29}>
                <Ic width={18} height={28} viewBox="0 0 18 28"><path d="M1 1v20l5-4 3 9 4-2-4-8h7z" fill="#fff" stroke="#777" strokeWidth="1.300" /></Ic>
                <CmdText $ml={13}>选择</CmdText><Chev ml={10} />
              </CmdRow>
            </CmdCol>
          </GroupBody>
          <GroupFooter>编辑</GroupFooter>
        </Group>
        <GroupSep />

        <Group $w={333}>
          <GroupBody>
            <CmdCol>
              <CmdRow $pl={21}>
                <Ic width={32} height={28} viewBox="0 0 32 28"><circle cx="18" cy="14" r="14" fill="#ea6a3d" /><path d="M18 0a14 14 0 0 1 14 14H18z" fill="#f29a78" /><rect y="6" width="15" height="16" rx="1" fill="#c43e1c" /><text x="3.500" y="19" fontSize="12" fontWeight="700" fontFamily="Open Sans" fill="#fff">P</text></Ic>
                <CmdText $ml={7} $ls={0.25}>Microsoft PowerPoint</CmdText>
              </CmdRow>
              <CmdRow $pl={21}>
                <Ic width={32} height={28} viewBox="0 0 32 28"><rect x="8" width="24" height="28" fill="#21a366" /><rect x="20" width="12" height="14" fill="#33c481" /><rect x="8" y="14" width="12" height="14" fill="#107c41" /><rect x="20" y="14" width="12" height="14" fill="#185c37" /><rect y="6" width="15" height="16" rx="1" fill="#107c41" /><text x="3.500" y="19" fontSize="12" fontWeight="700" fontFamily="Open Sans" fill="#fff">X</text></Ic>
                <CmdText $ml={7} $ls={0.25}>Microsoft Excel</CmdText>
              </CmdRow>
            </CmdCol>
          </GroupBody>
          <GroupFooter>工作必备</GroupFooter>
        </Group>
        <GroupSep />

        <Group $w={135}>
          <GroupBody>
            <SaveCol>
              <Ic width={54} height={41} viewBox="0 0 54 41" fill="none" strokeWidth="7">
                <circle cx="27" cy="11" r="8" stroke="#4ba6de" />
                <circle cx="13" cy="30" r="8" stroke="#46b0e6" />
                <circle cx="41" cy="30" r="8" stroke="#46b0e6" />
                <path d="M21 18c2 3 10 3 12 0" stroke="#e4606d" />
              </Ic>
              <SaveText>保存到<br />百度网盘</SaveText>
            </SaveCol>
          </GroupBody>
          <GroupFooter>保存</GroupFooter>
        </Group>
        <GroupSep />
        <CollapseZone>
          <Ic width={20} height={11} viewBox="0 0 20 11"><path d="M1 10l9-9 9 9" fill="none" stroke="#444" strokeWidth="1.500" /></Ic>
        </CollapseZone>
      </Ribbon>

      <Canvas>
        <PageArea>
          <Page>
            <DocTitle>第三课<RetMark w={43} h={36} ml={3} mr={-46} va={6} c="#8a8a8a" sw={2} /></DocTitle>
            <DocLine><RetMark ml={-2} va={7} /></DocLine>
            <DocLine>列表标签通常有三种：无序列表、有序列表和定义列表。<RetMark ml={5} /></DocLine>
            <DocLine>列表标签的实现效果如下图所示：<RetMark ml={2} /></DocLine>
            {demo("disc", 31)}
            {demo("square", 30)}
            {demo("circle", 31)}
            <DocLine $h={30} $mt={23} $pl={870}><RetMark w={19} h={16} ml={0} /></DocLine>
            <DocH2>第一部分：无序列表<RetMark w={28} h={22} ml={1} va={8} c="#8a8a8a" />
              <Cursor width={20} height={21} viewBox="0 0 20 21"><path d="M3 1h14M10 1v19M3 20h14" stroke="#000" strokeWidth="2.500" fill="none" /></Cursor>
            </DocH2>
            <DocLine $h={50} $mt={24}>无序列表：没有先后的顺序<RetMark ml={1} /></DocLine>
            <DocBullet><BigDot /><SmallDot />这是无序列表<RetMark w={15} ml={1} /></DocBullet>
          </Page>
        </PageArea>
        <Scrollbar>
          <ScrollBtn $h={32}><Ic width={16} height={10} viewBox="0 0 16 10"><path d="M8 0l8 10H0z" fill="#777" /></Ic></ScrollBtn>
          <Thumb />
          <ScrollFill />
          <ScrollBtn $h={33}><Ic width={10} height={14} viewBox="0 0 10 14"><path d="M0 0h10L5 14z" fill="#777" /></Ic></ScrollBtn>
        </Scrollbar>
      </Canvas>

      <StatusBar>
        <StatusText>第 1</StatusText>
        <StatusText $ml={55}>共 5 页</StatusText>
        <StatusText $ml={38}>622 个字</StatusText>
        <Ic $ml={36} width={30} height={28} viewBox="0 0 30 28"><path d="M1 2h12l5 2v22l-5-2H1zM18 4l5-2M18 26h-4" fill="none" stroke="#888" strokeWidth="1.400" /><path d="M22 10l7 9M29 10l-7 9" stroke="#666" strokeWidth="2" /></Ic>
        <StatusText $ml={35}>中文(中国)</StatusText>
        <Ic $ml={40} width={27} height={31} viewBox="0 0 27 31"><circle cx="5" cy="5" r="5" fill="#555" /><rect x="3" y="3" width="24" height="28" fill="#fff" stroke="#888" /><rect x="6" y="3" width="21" height="7" fill="#666" /><path d="M6 15h18M6 20h18M6 25h18" stroke="#666" strokeWidth="1.600" strokeDasharray="4 1.500" /></Ic>
        <Ic $ml={1553} width={28} height={32} viewBox="0 0 28 32"><path d="M1 1h26v28H1zM14 1v30" fill="none" stroke="#888" strokeWidth="1.300" /><path d="M5 7h6M5 12h6M5 17h6M5 22h6M17 7h6M17 12h6M17 17h6M17 22h6" stroke="#777" strokeWidth="1.400" /></Ic>
        <ViewPressed $ml={27}>
          <Ic width={28} height={32} viewBox="0 0 28 32"><path d="M1 1h26v30H1z" fill="none" stroke="#777" strokeWidth="1.400" /><path d="M5 6h18M5 11h18M5 16h18M5 21h18M5 26h18" stroke="#666" strokeWidth="1.400" /></Ic>
        </ViewPressed>
        <Ic $ml={27} width={30} height={34} viewBox="0 0 30 34"><path d="M1 1h15v28H1z" fill="none" stroke="#999" /><path d="M3 6h15M3 11h15M3 16h15M3 21h10" stroke="#777" strokeWidth="1.300" /><circle cx="20" cy="25" r="8" fill="#777" /><path d="M14 25h12M20 17v16" stroke="#fff" /></Ic>
        <Ic $ml={36} width={16} height={3} viewBox="0 0 16 3"><path d="M2 1.500h10" stroke="#666" strokeWidth="2" /></Ic>
        <SliderTrack><SliderThumb /></SliderTrack>
        <Ic $ml={11} width={16} height={16} viewBox="0 0 16 16"><path d="M0 8h16M8 0v16" stroke="#666" strokeWidth="1.600" /></Ic>
        <StatusText $ml={25}>126%</StatusText>
      </StatusBar>

      <Taskbar>
        <SearchBox />
        <TaskIcon $ml={129} $w={26} $top={16} $bg="#3a3a3a" $round={5} $border="3px solid #ddd" />
        <TaskIcon $ml={59} $w={33} $top={16} $bg="linear-gradient(90deg,#2aa6d8 60%,#e7d66c)" $round={16} />
        <TaskIcon $ml={47} $w={27} $top={18} $bg="#d14f45" $round={14} />
        <TaskIcon $ml={50} $w={34} $top={16} $bg="#2cc4d2" $round={17} />
        <TaskIcon $ml={52} $w={23} $top={17} $bg="#1570c0" $round={12} />
        <TaskIcon $ml={48} $w={43} $top={16} $bg="#0a2a3f" $border="2px solid #3fb6d6" />
        <TaskIcon $ml={38} $w={19} $top={21} $bg="#6d5324" />
        <TaskIcon $ml={65} $w={37} $top={16} $bg="#5b94ec" $round={12} />
        <TaskIcon $ml={41} $w={44} $top={16} $bg="#fff" $round={12} />
        <TaskActive $ml={19}><TaskActiveBar /></TaskActive>
        <TaskIcon $ml={51} $w={22} $top={16} $bg="linear-gradient(90deg,#1f8fe0 50%,#0d63b5 50%)" $round={11} />
        <Clock>21:17</Clock>
        <TaskEdge />
      </Taskbar>

      <Bubble>00:20</Bubble>
      <Ime>
        <ImeGrip />
        <ImeChar>英</ImeChar>
        <Ic $ml={25} width={38} height={40} viewBox="0 0 38 40"><path d="M17 1c11 1 20 9 20 20 0 10-9 18-19 18C10 39 4 35 1 30c11 1 21-4 21-15 0-5-2-10-5-14z" fill="none" stroke="#111" strokeWidth="2" /></Ic>
        <Ic $ml={27} width={38} height={38} viewBox="0 0 38 38" fill="none" stroke="#111" strokeWidth="2">
          <circle cx="19" cy="19" r="6.500" />
          <path d="M16 1h6l1 5 4 2 4-3 5 5-3 4 2 4 4 1v6l-4 1-2 4 3 4-5 5-4-3-4 2-1 4h-6l-1-4-4-2-4 3-5-5 3-4-2-4-4-1v-6l4-1 2-4-3-4 5-5 4 3 4-2z" transform="translate(1.400 1.400) scale(.93)" />
        </Ic>
      </Ime>
    </Shell>
  );
}

export default App;
